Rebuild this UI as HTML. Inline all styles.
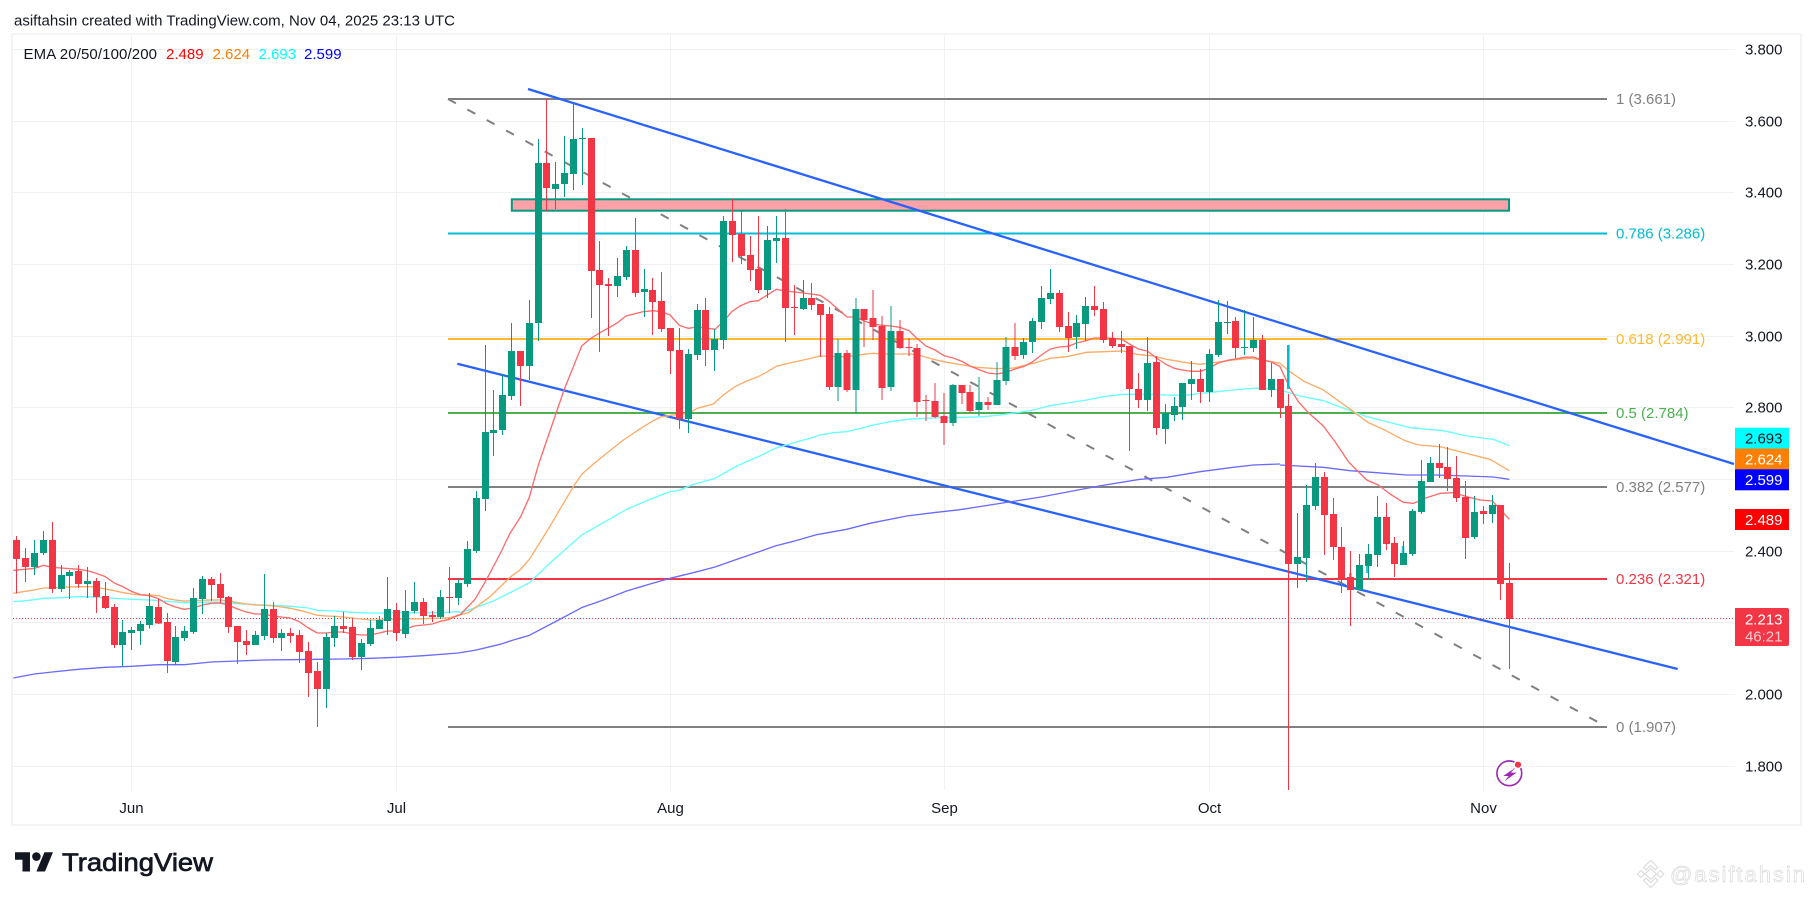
<!DOCTYPE html>
<html lang="en">
<head>
<meta charset="utf-8">
<title>TradingView chart</title>
<style>
html,body{margin:0;padding:0;background:#fff;width:1814px;height:900px;overflow:hidden}
svg{position:absolute;left:0;top:0;display:block}
text{font-family:"Liberation Sans",Arial,sans-serif;font-size:15px}
.grid{stroke:#f0f1f3;stroke-width:1;fill:none;shape-rendering:crispEdges}
.gw,.rw{fill:none;stroke-width:3;shape-rendering:crispEdges}
.gb,.rb{fill:none;stroke-width:21;shape-rendering:crispEdges}
.gw,.gb{stroke:#089981}
.rw,.rb{stroke:#f23645}
.e{fill:none;stroke-width:4;stroke-linejoin:round}
.e1{stroke:#ff6a6a}
.e2{stroke:#ffab66}
.e3{stroke:#66ffff}
.e4{stroke:#6a6aff}
.ax{fill:#131722}
</style>
</head>
<body>
<svg width="1814" height="900" viewBox="0 0 1814 900" xmlns="http://www.w3.org/2000/svg">
<rect width="1814" height="900" fill="#fff"/>
<text x="14" y="25.5" fill="#131722" textLength="441">asiftahsin created with TradingView.com, Nov 04, 2025 23:13 UTC</text>
<rect x="12" y="34" width="1789" height="791" fill="#fff" stroke="#f3f4f5" stroke-width="2"/>
<path class="grid" d="M13 49.5H1734M13 121.5H1734M13 192.5H1734M13 264.5H1734M13 336.5H1734M13 407.5H1734M13 479.5H1734M13 551.5H1734M13 622.5H1734M13 694.5H1734M13 766.5H1734M131.5 35V790M396.5 35V790M670.5 35V790M944.5 35V790M1209.5 35V790M1483.5 35V790"/>

<text x="23.5" y="59" class="ax" textLength="133.5">EMA 20/50/100/200</text>
<text x="166" y="59" fill="#ff0000">2.489</text>
<text x="212.5" y="59" fill="#ff7f00">2.624</text>
<text x="258.5" y="59" fill="#00ffff">2.693</text>
<text x="304" y="59" fill="#0000ff">2.599</text>

<!-- Fibonacci retracement -->
<path d="M448 99H1607" stroke="#808080" stroke-width="2"/>
<path d="M448 233.5H1607" stroke="#00bcd4" stroke-width="2"/>
<path d="M448 339H1607" stroke="#ffb92c" stroke-width="2"/>
<path d="M448 413H1607" stroke="#4caf50" stroke-width="2"/>
<path d="M448 487H1607" stroke="#808080" stroke-width="2"/>
<path d="M448 579H1607" stroke="#f23645" stroke-width="2"/>
<path d="M448 727H1607" stroke="#808080" stroke-width="2"/>
<path d="M448 99L1607 727" stroke="#808080" stroke-width="2" stroke-dasharray="9 13" fill="none"/>
<text x="1616" y="104" fill="#808080">1 (3.661)</text>
<text x="1616" y="238.5" fill="#00bcd4">0.786 (3.286)</text>
<text x="1616" y="344" fill="#ffb92c">0.618 (2.991)</text>
<text x="1616" y="418" fill="#4caf50">0.5 (2.784)</text>
<text x="1616" y="492" fill="#808080">0.382 (2.577)</text>
<text x="1616" y="584" fill="#f23645">0.236 (2.321)</text>
<text x="1616" y="732" fill="#808080">0 (1.907)</text>

<!-- Channel + box -->
<rect x="511.8" y="199.3" width="997.2" height="11.4" fill="#faa2a8" stroke="#089981" stroke-width="2"/>
<path d="M528 89L1734 464" stroke="#2962ff" stroke-width="2.3" fill="none"/>
<path d="M457.3 363.7L1677.7 669" stroke="#2962ff" stroke-width="2.3" fill="none"/>
<path d="M13 618.5H1734" stroke="#f23645" stroke-width="1" stroke-dasharray="1 2" fill="none" shape-rendering="crispEdges"/>

<!-- EMA lines, traced in 3x crop coordinates -->
<g transform="translate(0 480) scale(.33333)">
<polyline class="e e4" points="40,594 103,582 157,576 235,568 316,562 394,559 475,554 553,554 634,546 712,543 793,540 871,539 952,538 1030,537 1111,535 1189,532 1270,527 1375,519 1429,510 1500,493 1540,480"/>
<polyline class="e e3" points="40,365 76,362 103,359 130,355 184,353 235,350 262,350 289,352 316,354 343,355 394,358 448,360 502,364 553,368 607,367 661,366 712,371 766,374 820,376 871,379 925,384 952,391 1003,393 1057,397 1111,399 1162,399 1216,398 1270,398 1321,398 1375,395 1380,395"/>
<polyline class="e e2" points="40,340 76,334 103,330 130,324 157,324 184,322 235,320 262,320 289,321 316,327 343,332 370,338 394,342 421,345 448,345 475,347 502,356 526,360 553,363 580,362 607,361 634,360 661,360 685,362 712,368 739,372 766,375 793,376 820,378 844,381 871,385 898,391 925,398 952,406 979,408 1003,409 1030,411 1057,414 1084,417 1111,420 1138,420 1162,418 1189,417 1216,417 1243,417 1270,416 1297,415 1321,415 1348,413 1375,407 1380,405"/>
<polyline class="e e1" points="40,271 76,268 103,265 130,256 157,262 184,264 235,268 262,272 289,280 316,290 343,309 370,321 394,334 421,344 448,347 475,356 502,372 526,381 553,388 580,384 607,375 634,370 661,369 685,375 712,387 739,396 766,402 793,402 820,409 844,411 871,414 898,425 925,444 952,459 979,459 1003,456 1030,456 1057,462 1084,465 1111,465 1138,459 1162,453 1189,453 1216,447 1243,438 1270,435 1297,432 1321,424 1348,418 1375,405 1380,405"/>
</g>
<g transform="translate(460 440) scale(.33333)">
<polyline class="e e4" points="160,600 208,586 290,543 365,503 430,480 500,453 570,432 630,415 700,398 765,381 830,358 895,336 945,318 1000,304 1070,284 1160,268 1230,250 1340,228 1420,218 1500,209"/>
<polyline class="e e3" points="0,518 40,505 100,483 150,458 208,428 280,360 365,285 430,248 500,208 570,178 630,155 660,150 700,133 765,115 830,78 895,50 945,25"/>
<polyline class="e e2" points="0,525 25,518 90,470 150,412 180,390 208,358 260,275 340,140 365,103 400,72 490,0"/>
<polyline class="e e1" points="0,525 45,478 80,418 120,342 150,280 182,230 208,172 235,75"/>
</g>
<g transform="translate(440 80) scale(.33333)">
<polyline class="e e2" points="550,1080 610,1040 640,1022 665,1010 700,1005 745,1000 772,985 820,972 850,945 885,920 920,903 955,890 982,875 1009,859 1036,852 1090,840 1141,828 1200,830"/>
<polyline class="e e1" points="295,1155 372,930 425,798 450,777 480,758 530,730 558,708 610,695 640,692 665,695 690,705 718,736 745,745 772,741 825,748 850,725 875,695 900,678 930,665 955,662 982,645 1009,628 1036,633 1063,636 1090,639 1114,642 1141,646 1168,665 1200,693"/>
</g>
<g transform="translate(800 240) scale(.33333)">
<polyline class="e e4" points="480,809 723,771 897,738 1020,718 1100,712 1200,695 1300,682 1360,675 1440,672"/>
<polyline class="e e3" points="-75,625 0,603 30,595 60,585 100,578 138,575 170,568 220,555 270,545 320,538 380,535 430,533 490,532 550,530 600,525 650,518 700,510 750,497 800,489 860,480 910,470 970,463 1030,463 1100,465 1160,466 1200,460 1250,455 1300,450 1360,445 1400,445 1441,450"/>
<polyline class="e e2" points="120,350 140,350 190,343 220,340 250,342 300,342 330,342 360,346 400,358 440,367 490,375 530,382 590,386 640,384 700,370 750,355 800,350 860,337 910,335 970,333 1010,343 1060,348 1100,358 1160,368 1200,373 1250,367 1300,360 1350,355 1390,360 1440,370"/>
<polyline class="e e1" points="120,213 141,231 168,231 192,243 219,252 246,256 273,258 300,262 327,272 351,295 378,318 405,330 432,347 459,354 486,364 510,378 537,389 564,399 591,402 618,397 645,387 670,380 697,366 724,345 751,327 778,321 805,319 829,309 856,303 883,294 910,294 937,295 964,297 988,312 1015,327 1042,333 1069,354 1096,372 1123,385 1147,390 1174,394 1201,394 1228,384 1255,369 1282,361 1306,357 1333,352 1360,351 1387,360 1414,366 1441,380"/>
</g>
<g transform="translate(1280 190) scale(.33333)">
<polyline class="e e4" points="0,825 130,832 210,842 380,855 470,855 560,858 640,861 688,868"/>
<polyline class="e e3" points="0,600 60,618 130,632 200,658 260,680 320,695 390,713 490,722 560,738 640,748 688,767"/>
<polyline class="e e2" points="0,520 30,545 70,573 130,600 200,650 265,698 310,718 375,752 415,765 480,770 550,788 630,808 688,842"/>
<polyline class="e e1" points="0,530 30,595 55,635 85,668 130,708 165,755 205,815 260,870"/>
</g>
<g transform="translate(1250 420) scale(.33333)">
<polyline class="e e1" points="350,180 385,195 420,222 460,247 490,250 530,233 570,220 610,218 650,230 690,240 727,243 778,298"/>
</g>

<!-- small teal bars -->
<path d="M1288.3 345V389" stroke="#00bcd4" stroke-width="2.6" fill="none"/>
<path d="M1367.3 563V573M1403 546V555M1350.3 573V580" stroke="#00bcd4" stroke-width="2.6" fill="none" opacity=".8"/>

<!-- Candles -->
<g transform="translate(0 480) scale(.33333)">
<path class="gw" d="M103 180V285M130 153V225M184 255V336M208 270V357M262 261V354M367 420V558M394 441V510M421 423V495M448 339V445M526 438V555M553 438V483M580 324V462M607 288V402M766 453V495M793 282V480M844 447V513M979 459V684M1003 408V501M1084 477V570M1111 420V498M1138 408V447M1162 291V465M1216 330V474M1243 306V400M1321 330V417M1375 297V375M1402 183V321M1429 33V219"/>
<path class="rw" d="M50 168V340M76 204V306M157 126V339M235 255V324M289 294V399M316 306V387M343 372V504M475 357V432M502 399V579M634 291V363M661 279V370M685 348V459M712 438V552M739 450V525M820 366V489M871 444V489M898 450V549M925 486V651M952 546V741M1030 396V459M1057 414V540M1189 369V483M1270 354V432M1297 393V426M1348 261V399"/>
<path class="gb" d="M103 219V261M130 180V219M184 285V327M208 276V288M262 303V312M367 456V495M394 450V459M421 432V453M448 378V435M526 471V546M553 453V474M580 354V456M607 297V357M766 465V495M793 387V468M844 459V474M979 471V627M1003 438V474M1084 489V531M1111 444V492M1138 420V447M1162 387V423M1216 393V462M1243 366V393M1321 351V411M1375 309V354M1402 207V312M1429 54V213"/>
<path class="rb" d="M50 180V237M76 234V261M157 180V327M235 273V312M289 303V351M316 348V384M343 381V495M475 381V430M502 426V543M634 297V315M661 312V354M685 351V441M712 438V486M739 483V495M820 387V474M871 459V468M898 465V516M925 513V579M952 573V627M1030 438V447M1057 441V531M1189 390V459M1270 366V408M1297 405V411M1348 351V354"/>
</g>
<g transform="translate(440 80) scale(.33333)">
<path class="gw" d="M136 795V1293M160 930V1128M187 885V1065M214 729V960M268 660V900M295 177V783M346 246V387M373 168V351M400 69V330M427 144V315M532 534V651M559 498V600M613 567V711M745 807V1059M772 672V840M823 747V873M850 408V807M982 438V654M1009 408V549M1090 600V690"/>
<path class="rw" d="M241 813V978M319 57V395M454 174V714M478 483V816M505 594V768M586 414V651M637 594V765M664 576V756M691 744V882M718 744V1047M796 654V858M877 357V546M904 393V552M931 468V603M955 408V639M1036 387V786M1063 615V765M1114 609V690M1141 672V831M1168 681V930"/>
<path class="gb" d="M136 1056V1257M160 1050V1059M187 945V1050M214 813V948M268 729V858M295 249V729M346 312V327M373 279V312M400 177V282M427 174V177M532 588V618M559 510V591M613 627V636M745 822V1017M772 690V825M823 777V810M850 423V780M982 480V630M1009 474V483M1090 654V687"/>
<path class="rb" d="M241 813V858M319 249V324M454 174V573M478 570V615M505 612V618M586 510V639M637 630V666M664 663V747M691 744V813M718 810V1017M796 690V810M877 423V465M904 462V528M931 525V570M955 567V630M1036 474V684M1063 681V684M1114 654V675M1141 672V705M1168 702V921"/>
</g>
<g transform="translate(800 240) scale(.33333)">
<path class="gw" d="M114 297V483M168 174V522M273 198V453M459 432V558M537 411V528M591 366V495M618 291V435M670 294V357M697 234V339M724 138V267M751 87V192M829 225V327M856 171V303M1042 291V513M1096 492V612M1123 471V543M1147 429V540M1174 363V480M1228 327V486M1255 180V351M1282 183V282M1333 210V345M1360 231V336M1414 369V471"/>
<path class="rw" d="M141 330V456M192 207V321M219 150V300M246 228V480M300 240V327M327 294V348M351 312V531M378 465V543M405 429V534M432 459V615M486 435V492M510 435V519M564 471V510M645 249V360M778 150V276M805 216V336M883 138V228M910 186V309M937 276V324M964 273V339M988 318V633M1015 399V504M1069 348V585M1201 387V489M1306 231V354M1387 285V450M1441 417V534"/>
<path class="gb" d="M114 339V441M168 207V450M273 273V441M459 435V549M537 486V510M591 420V495M618 321V423M670 306V345M697 243V306M724 174V246M751 159V177M829 249V291M856 198V252M1042 369V480M1096 519V567M1123 498V525M1147 429V501M1174 417V432M1228 342V456M1255 246V345M1282 246V249M1333 321V324M1360 300V324M1414 417V450"/>
<path class="rb" d="M141 339V450M192 207V240M219 234V261M246 258V444M300 273V324M327 321V324M351 324V486M378 480V483M405 483V531M432 528V549M486 435V459M510 456V513M564 486V495M645 321V348M778 159V261M805 258V294M883 198V210M910 207V300M937 294V318M964 312V321M988 318V447M1015 447V480M1069 366V564M1201 417V456M1306 243V324M1387 300V450M1441 417V504"/>
</g>
<g transform="translate(1250 420) scale(.33333)">
<path class="gw" d="M142 279V504M169 195V486M196 129V270M328 402V510M355 372V480M382 228V441M460 363V435M487 267V408M514 120V282M541 111V186M673 228V357M727 225V309"/>
<path class="rw" d="M115 -78V1110M223 156V405M250 234V420M274 321V519M301 393V618M409 249V390M433 351V471M568 72V174M592 81V213M619 108V246M646 183V417M700 258V312M751 255V540M778 429V747"/>
<path class="gb" d="M142 411V432M169 255V414M196 171V258M328 435V510M355 402V438M382 291V405M460 399V435M487 273V402M514 183V276M541 129V186M673 276V351M727 255V282"/>
<path class="rb" d="M115 -42V432M223 171V285M250 282V381M274 381V477M301 471V510M409 291V372M433 369V432M568 129V144M592 141V177M619 174V234M646 231V354M700 273V282M751 255V492M778 489V597"/>
</g>

<!-- Price axis -->
<g class="ax" text-anchor="end">
<text x="1782.5" y="54.5">3.800</text>
<text x="1782.5" y="126.5">3.600</text>
<text x="1782.5" y="197.5">3.400</text>
<text x="1782.5" y="269.5">3.200</text>
<text x="1782.5" y="341.5">3.000</text>
<text x="1782.5" y="412.5">2.800</text>
<text x="1782.5" y="556.5">2.400</text>
<text x="1782.5" y="699.5">2.000</text>
<text x="1782.5" y="771.5">1.800</text>
</g>
<rect x="1735" y="427.7" width="54" height="21" fill="#00ffff"/>
<rect x="1735" y="448.5" width="54" height="21" fill="#ff7f00"/>
<rect x="1735" y="469.3" width="54" height="21" fill="#0000ff"/>
<rect x="1735" y="509" width="54" height="21" fill="#ff0000"/>
<path d="M1735 608H1787a2 2 0 0 1 2 2V644a2 2 0 0 1 -2 2H1735z" fill="#f23645"/>
<g text-anchor="end">
<text x="1782.5" y="443.5" fill="#131722">2.693</text>
<text x="1782.5" y="464.3" fill="#fff">2.624</text>
<text x="1782.5" y="485" fill="#fff">2.599</text>
<text x="1782.5" y="524.8" fill="#fff">2.489</text>
<text x="1782.5" y="624.5" fill="#fff">2.213</text>
<text x="1782.5" y="641.5" fill="#fff" fill-opacity=".75">46:21</text>
</g>

<!-- Time axis -->
<g class="ax" text-anchor="middle">
<text x="131.5" y="813">Jun</text>
<text x="396.5" y="813">Jul</text>
<text x="670.5" y="813">Aug</text>
<text x="944.5" y="813">Sep</text>
<text x="1209.5" y="813">Oct</text>
<text x="1483.5" y="813">Nov</text>
</g>

<!-- Lightning icon -->
<circle cx="1509.3" cy="773.3" r="12.4" fill="none" stroke="#9c27b0" stroke-width="1.6"/>
<path d="M1516 767.3L1503.2 776H1508.6L1504.5 781.3L1516.5 772.6H1510.8z" fill="#9c27b0"/>
<circle cx="1518" cy="764.7" r="4.4" fill="#fff"/>
<circle cx="1518" cy="764.7" r="3.1" fill="#f23645"/>

<!-- TradingView logo -->
<g transform="translate(15 848) scale(1.07)" fill="#131722">
<path d="M14 22H7V11H0V4h14v18zM28 22h-8l7.5-18h8L28 22z"/>
<circle cx="20" cy="8" r="4"/>
</g>
<text x="62" y="871" fill="#131722" stroke="#131722" stroke-width=".7" textLength="151" lengthAdjust="spacingAndGlyphs" style="font-size:25px">TradingView</text>

<!-- Watermark -->
<g fill="#fff" stroke="#dcdcdc" stroke-width="1.2" stroke-linejoin="round">
<path d="M1650.7 868.5l5.5 5.5-5.5 5.5-5.5-5.5z"/>
<path d="M1641 870.5l3.5 3.5-3.5 3.5-3.5-3.5z"/>
<path d="M1660.4 870.5l3.5 3.5-3.5 3.5-3.5-3.5z"/>
<path d="M1643.5 867.5l7.2-7.2 7.2 7.2-2.6 2.4-4.6-4.6-4.6 4.6z"/>
<path d="M1643.5 880.5l7.2 7.2 7.2-7.2-2.6-2.4-4.6 4.6-4.6-4.6z"/>
</g>
<text x="1670" y="882" fill="#fff" stroke="#d9d9d9" stroke-width=".7" textLength="135" style="font-size:22px">@asiftahsin</text>
</svg>
</body>
</html>
